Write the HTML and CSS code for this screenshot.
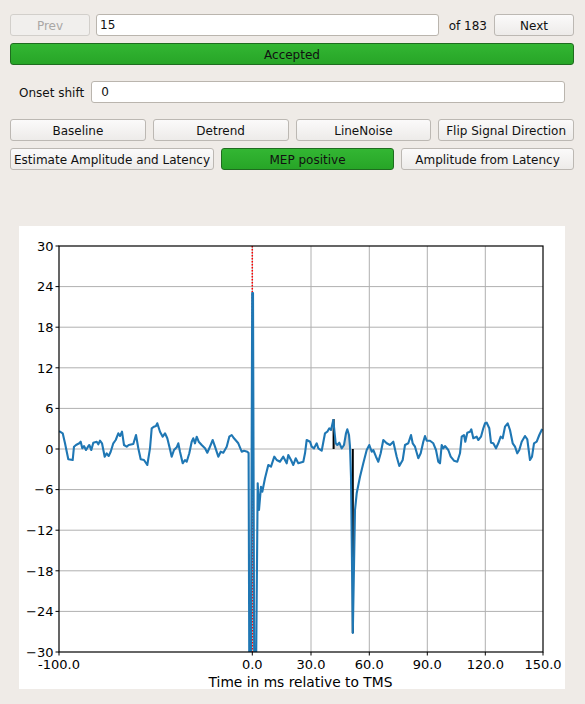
FILE: index.html
```html
<!DOCTYPE html>
<html>
<head>
<meta charset="utf-8">
<link rel="stylesheet" href="styles.css">
</head>
<body>
<div class="app">
  <div class="nav">
    <button class="btn disabled">Prev</button>
    <input class="field field-nav" value="15">
    <span class="of">of 183</span>
    <button class="btn">Next</button>
  </div>
  <div class="status">Accepted</div>
  <div class="onset">
    <span class="onset-label">Onset shift</span>
    <input class="field field-onset" value="0">
  </div>
  <div class="grid4">
    <button class="btn">Baseline</button>
    <button class="btn">Detrend</button>
    <button class="btn">LineNoise</button>
    <button class="btn">Flip Signal Direction</button>
  </div>
  <div class="grid3">
    <button class="btn">Estimate Amplitude and Latency</button>
    <button class="btn green">MEP positive</button>
    <button class="btn">Amplitude from Latency</button>
  </div>
  <div class="plot">
    <svg class="chart" width="546" height="463" viewBox="19 226 546 463" xmlns="http://www.w3.org/2000/svg">
      <defs>
        <clipPath id="ax"><rect x="59" y="246" width="484" height="406"/></clipPath>
      </defs>
      <g class="grid">
        <line x1="59" y1="286.6" x2="543" y2="286.6"/>
        <line x1="59" y1="327.2" x2="543" y2="327.2"/>
        <line x1="59" y1="367.8" x2="543" y2="367.8"/>
        <line x1="59" y1="408.4" x2="543" y2="408.4"/>
        <line x1="59" y1="449" x2="543" y2="449"/>
        <line x1="59" y1="489.6" x2="543" y2="489.6"/>
        <line x1="59" y1="530.2" x2="543" y2="530.2"/>
        <line x1="59" y1="570.8" x2="543" y2="570.8"/>
        <line x1="59" y1="611.4" x2="543" y2="611.4"/>
        <line x1="252.3" y1="246" x2="252.3" y2="652"/>
        <line x1="311" y1="246" x2="311" y2="652"/>
        <line x1="369.3" y1="246" x2="369.3" y2="652"/>
        <line x1="427.3" y1="246" x2="427.3" y2="652"/>
        <line x1="485.3" y1="246" x2="485.3" y2="652"/>
      </g>
      <g clip-path="url(#ax)">
        <line class="onsetline" x1="252.3" y1="246" x2="252.3" y2="652"/>
        <polygon class="fill" points="333.3,449 333.3,420 335.7,443.3 337.3,445 339.3,442.7 341.7,448.3 344,445 346,433.3 347.3,429.3 349,435 350,446.7 350.5,449"/>
        <line class="mark" x1="333.6" y1="449" x2="333.6" y2="419"/>
        <line class="mark" x1="352.8" y1="449" x2="352.8" y2="633"/>
        <polyline class="trace" points="60,431.7 62.7,433.3 65,443.3 68.3,459.3 72.7,460 74,446.7 76,445 79.3,443.3 80.7,441.7 82.3,448.3 84,446 86,450 88,446.7 89.3,445 91.3,450 93.3,442.7 96.7,441.7 98.3,444.3 100,440.7 102,443.3 104.7,456.7 106.7,453.3 108.7,456 110.7,451.7 113.3,443.3 115.7,440 118.3,433.3 120,436 122,431.7 124,445 126.7,446.7 128.7,445 133.3,444 136,435 138.3,448.3 140.7,459.3 144,460 147.3,465 150,448.3 151.7,428.3 154,426.7 156,426 157.3,423.3 160,431.7 162.7,436.7 165,433.3 167.3,438.3 170,449.3 171.7,456.7 174,450 176.7,447.3 178.3,443.3 180,451.7 182.7,463.3 185,460 186.7,461.7 189.3,453.3 191.7,441.7 193.3,438.3 195,443.3 196.7,436.7 198.7,441.7 201.7,445 205,448.3 207.3,452.7 209.3,448.3 212.7,440 215,446.7 218.3,456.7 220.7,451.7 223.3,452.7 226.7,446.7 229.3,436.7 231.7,435 234,438.3 238.3,443.3 241.7,451.7 244,450.7 247.3,451.7 248.6,453 249.4,700 250.8,700 252.2,293 253,293 254.3,700 255.8,700 257.7,483.3 259,510 261,486.7 262.3,491.7 265,478.3 268.3,465 271,466.7 274.3,456.7 276.7,460 280,461.7 283.3,456.7 286.7,463.3 288.3,455 291,460 293.3,465 295.7,458.3 298.3,463.3 303.3,461.7 305,453.3 306.7,440 310,441.7 311.7,446.7 314,448.3 316.7,443.3 318.3,448.3 321.7,450.7 325,433.3 327.3,431.7 329.3,428.3 331,430 333.3,420 335.7,443.3 337.3,445 339.3,442.7 341.7,448.3 344,445 346,433.3 347.3,429.3 349,435 350,446.7 351,476.7 352.8,633 355,510 356.7,493.3 360,476.7 363.3,463.3 366.7,450 369.3,445 371.7,451.7 373.3,450 376,456.7 378.3,461.7 380.7,453.3 383.3,440 386.7,443.3 390,445 393.3,441.7 396.7,456.7 399.3,466 402.7,460 405,445 408.3,443.3 411,435 412.7,443.3 415,446.7 418.3,458.3 420.7,453.3 423.3,441.7 425,436 426.7,440.7 430,440.7 433.3,443.3 436,450 438.3,461.7 440,463.3 441.7,445 443.3,448.3 445,446 448.3,450 450.7,456.7 454,460.7 457.3,461.7 460,453.3 461.7,436.7 464,435 465.3,441.7 467.3,432.7 470,431.7 471.3,429.3 473.3,438.3 476.7,436.7 478.3,440 481,436.7 483.3,428.3 485,423.3 486.7,422.7 489.3,428.3 491,442.7 493.3,443.3 496,448.3 498.3,443.3 500.7,436.7 502.7,438.3 505,426.7 507.7,423.3 510,430 512.7,443.3 515,446.7 517.3,453.3 519.3,450 521.7,441.7 525,436 527.3,439.3 530,460 532,456.7 534,443.3 536.7,441.7 539.3,435 541.7,430"/>
      </g>
      <rect class="frame" x="59" y="246" width="484" height="406"/>
      <g class="ticks">
        <line x1="55.5" y1="246" x2="59" y2="246"/>
        <line x1="55.5" y1="286.6" x2="59" y2="286.6"/>
        <line x1="55.5" y1="327.2" x2="59" y2="327.2"/>
        <line x1="55.5" y1="367.8" x2="59" y2="367.8"/>
        <line x1="55.5" y1="408.4" x2="59" y2="408.4"/>
        <line x1="55.5" y1="449" x2="59" y2="449"/>
        <line x1="55.5" y1="489.6" x2="59" y2="489.6"/>
        <line x1="55.5" y1="530.2" x2="59" y2="530.2"/>
        <line x1="55.5" y1="570.8" x2="59" y2="570.8"/>
        <line x1="55.5" y1="611.4" x2="59" y2="611.4"/>
        <line x1="55.5" y1="652" x2="59" y2="652"/>
        <line x1="59" y1="652" x2="59" y2="655.5"/>
        <line x1="252.3" y1="652" x2="252.3" y2="655.5"/>
        <line x1="311" y1="652" x2="311" y2="655.5"/>
        <line x1="369.3" y1="652" x2="369.3" y2="655.5"/>
        <line x1="427.3" y1="652" x2="427.3" y2="655.5"/>
        <line x1="485.3" y1="652" x2="485.3" y2="655.5"/>
        <line x1="543" y1="652" x2="543" y2="655.5"/>
      </g>
      <g class="ylab">
        <text x="53.5" y="250.8">30</text>
        <text x="53.5" y="291.4">24</text>
        <text x="53.5" y="332">18</text>
        <text x="53.5" y="372.6">12</text>
        <text x="53.5" y="413.2">6</text>
        <text x="53.5" y="453.8">0</text>
        <text x="53.5" y="494.4">−6</text>
        <text x="53.5" y="535">−12</text>
        <text x="53.5" y="575.6">−18</text>
        <text x="53.5" y="616.2">−24</text>
        <text x="53.5" y="656.8">−30</text>
      </g>
      <g class="xlab">
        <text x="59" y="668.5">-100.0</text>
        <text x="252.3" y="668.5">0.0</text>
        <text x="311" y="668.5">30.0</text>
        <text x="369.3" y="668.5">60.0</text>
        <text x="427.3" y="668.5">90.0</text>
        <text x="485.3" y="668.5">120.0</text>
        <text x="543" y="668.5">150.0</text>
      </g>
      <text class="xtitle" x="300.5" y="686.5">Time in ms relative to TMS</text>
    </svg>
  </div>
</div>
</body>
</html>
```

FILE: styles.css
```css
html, body {
  margin: 0;
  padding: 0;
}
body {
  background: #efebe7;
  font-family: "DejaVu Sans", "Liberation Sans", sans-serif;
  font-size: 12px;
  color: #111;
  width: 585px;
  height: 704px;
  overflow: hidden;
}
.app {
  padding: 14px 11px 0 10px;
}
.btn {
  box-sizing: border-box;
  height: 22px;
  margin: 0;
  padding: 1px 4px 0;
  font-family: inherit;
  font-size: 12px;
  color: #111;
  border: 1px solid #bcb8b3;
  border-radius: 3px;
  background: linear-gradient(#fbfafa, #edebe9);
  display: flex;
  align-items: center;
  justify-content: center;
  white-space: nowrap;
}
.btn.disabled {
  color: #a9a7a5;
  border-color: #d2cfcb;
  background: #f1efed;
}
.btn.green {
  border-color: #1f6c1f;
  background: linear-gradient(#33b633, #27a527);
}
.nav {
  display: flex;
  align-items: center;
  height: 22px;
  gap: 6px;
}
.nav .btn {
  width: 80px;
  flex: none;
}
.field {
  box-sizing: border-box;
  height: 22px;
  margin: 0;
  padding-top: 1px;
  border: 1px solid #bab5ae;
  border-radius: 3px;
  background: #fff;
  font-family: inherit;
  font-size: 12px;
  color: #111;
  outline: none;
}
.field-nav {
  width: 343px;
  flex: none;
  padding-left: 3px;
  padding-right: 3px;
}
.of {
  flex: 1;
  text-align: right;
  padding-right: 1px;
  padding-top: 1px;
}
.status {
  box-sizing: border-box;
  margin-top: 7px;
  height: 22px;
  padding-top: 1px;
  border: 1px solid #1f6c1f;
  border-radius: 3px;
  background: linear-gradient(#33b633, #27a527);
  display: flex;
  align-items: center;
  justify-content: center;
}
.onset {
  margin: 16px 9px 0 9px;
  display: flex;
  align-items: center;
  gap: 7px;
  height: 22px;
}
.onset-label {
  flex: none;
  padding-top: 1px;
}
.field-onset {
  flex: 1;
  padding-left: 9px;
  padding-right: 9px;
}
.grid4 {
  margin-top: 16px;
  display: grid;
  grid-template-columns: repeat(4, 1fr);
  gap: 7px;
}
.grid3 {
  margin-top: 7px;
  display: grid;
  grid-template-columns: 204px 1fr 1fr;
  gap: 7px;
}
.plot {
  margin: 56px 0 0 9px;
  width: 546px;
  height: 463px;
  background: #fff;
}
.chart {
  display: block;
}
.grid line {
  stroke: #b0b0b0;
  stroke-width: 1;
}
.ticks line {
  stroke: #000;
  stroke-width: 1;
}
.frame {
  fill: none;
  stroke: #000;
  stroke-width: 1.2;
}
.trace {
  fill: none;
  stroke: #1f77b4;
  stroke-width: 2.1;
  stroke-linejoin: round;
  stroke-linecap: square;
}
.mark {
  stroke: #000;
  stroke-width: 2;
}
.fill {
  fill: #cfcfcf;
  opacity: 0.7;
}
.onsetline {
  stroke: #ff0000;
  stroke-width: 1.5;
  stroke-dasharray: 1.5 1.5;
}
.ylab text, .xlab text, .xtitle {
  font-family: "DejaVu Sans", sans-serif;
  font-size: 13px;
  fill: #000;
}
.ylab text {
  text-anchor: end;
}
.xlab text {
  text-anchor: middle;
}
.xtitle {
  text-anchor: middle;
  font-size: 13.8px;
}
```
